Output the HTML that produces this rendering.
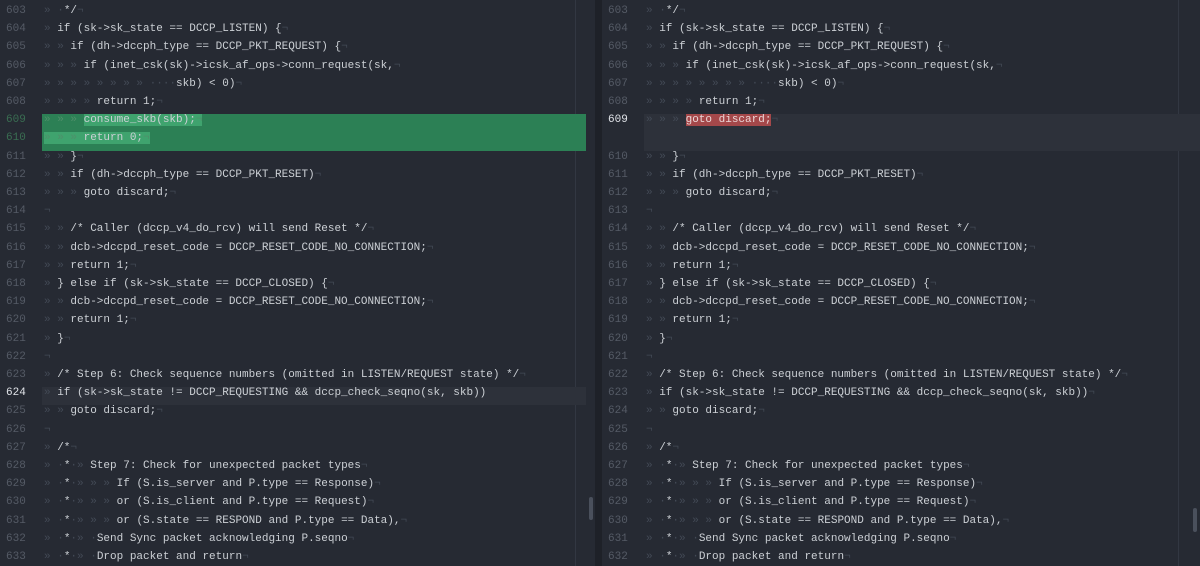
<!DOCTYPE html>
<html><head><meta charset="utf-8"><style>
html,body{margin:0;padding:0;width:1200px;height:566px;overflow:hidden;background:#262a33}
.pane{position:absolute;top:0;height:566px;overflow:hidden;background:#262a33}
#L{left:0;width:595px}
#R{left:602px;width:598px}
#div{position:absolute;left:595px;top:0;width:7px;height:566px;background:#1e2128}
.ln{position:absolute;left:0;height:18.2px;line-height:18.2px;font:11px "Liberation Mono",monospace;white-space:pre;color:#ccd0d5;width:100%;transform:translateY(5px)}
.n{position:absolute;left:6px;color:#555b66}
.c{position:absolute;left:44px}
i{font-style:normal;color:#434a56}
.cur .n{color:#e0e3e8}
.cur{background:linear-gradient(to right,transparent 42px,#2d313a 42px,#2d313a 586px,transparent 586px)}
.grn{background:linear-gradient(to right,transparent 42px,#2c8055 42px,#2c8055 586px,transparent 586px)}
.grn .n{color:#3a6e52}
.grn i{color:#4f8f6a}
.g2{background:#3fa36e}
.red{background:#a4484a;color:#ead7d7}
#R .n{left:6px}
#R .c{left:44px}
.guide{position:absolute;top:0;width:1px;height:566px;background:#323742}
.sb{position:absolute;width:4px;border-radius:2px;background:#4a505c}
</style></head><body>
<div class="pane" id="L">
<div class="guide" style="left:575px"></div>
<div class="sb" style="left:589px;top:497px;height:23px"></div>
<div class="ln" style="top:0px"><span class="n">603</span><span class="c"><i>» ·</i>*/<i>¬</i></span></div>
<div class="ln" style="top:18.2px"><span class="n">604</span><span class="c"><i>» </i>if (sk-&gt;sk_state == DCCP_LISTEN) {<i>¬</i></span></div>
<div class="ln" style="top:36.4px"><span class="n">605</span><span class="c"><i>» » </i>if (dh-&gt;dccph_type == DCCP_PKT_REQUEST) {<i>¬</i></span></div>
<div class="ln" style="top:54.6px"><span class="n">606</span><span class="c"><i>» » » </i>if (inet_csk(sk)-&gt;icsk_af_ops-&gt;conn_request(sk,<i>¬</i></span></div>
<div class="ln" style="top:72.8px"><span class="n">607</span><span class="c"><i>» » » » » » » » ····</i>skb) &lt; 0)<i>¬</i></span></div>
<div class="ln" style="top:91px"><span class="n">608</span><span class="c"><i>» » » » </i>return 1;<i>¬</i></span></div>
<div class="ln grn" style="top:109.2px"><span class="n">609</span><span class="c"><i>» » » </i><span class="g2">consume_skb(skb);<i>¬</i></span></span></div>
<div class="ln grn" style="top:127.4px"><span class="n">610</span><span class="c"><span class="g2"><i>» » » </i>return 0;<i>¬</i></span></span></div>
<div class="ln" style="top:145.6px"><span class="n">611</span><span class="c"><i>» » </i>}<i>¬</i></span></div>
<div class="ln" style="top:163.8px"><span class="n">612</span><span class="c"><i>» » </i>if (dh-&gt;dccph_type == DCCP_PKT_RESET)<i>¬</i></span></div>
<div class="ln" style="top:182px"><span class="n">613</span><span class="c"><i>» » » </i>goto discard;<i>¬</i></span></div>
<div class="ln" style="top:200.2px"><span class="n">614</span><span class="c"><i>¬</i></span></div>
<div class="ln" style="top:218.4px"><span class="n">615</span><span class="c"><i>» » </i>/* Caller (dccp_v4_do_rcv) will send Reset */<i>¬</i></span></div>
<div class="ln" style="top:236.6px"><span class="n">616</span><span class="c"><i>» » </i>dcb-&gt;dccpd_reset_code = DCCP_RESET_CODE_NO_CONNECTION;<i>¬</i></span></div>
<div class="ln" style="top:254.8px"><span class="n">617</span><span class="c"><i>» » </i>return 1;<i>¬</i></span></div>
<div class="ln" style="top:273px"><span class="n">618</span><span class="c"><i>» </i>} else if (sk-&gt;sk_state == DCCP_CLOSED) {<i>¬</i></span></div>
<div class="ln" style="top:291.2px"><span class="n">619</span><span class="c"><i>» » </i>dcb-&gt;dccpd_reset_code = DCCP_RESET_CODE_NO_CONNECTION;<i>¬</i></span></div>
<div class="ln" style="top:309.4px"><span class="n">620</span><span class="c"><i>» » </i>return 1;<i>¬</i></span></div>
<div class="ln" style="top:327.6px"><span class="n">621</span><span class="c"><i>» </i>}<i>¬</i></span></div>
<div class="ln" style="top:345.8px"><span class="n">622</span><span class="c"><i>¬</i></span></div>
<div class="ln" style="top:364px"><span class="n">623</span><span class="c"><i>» </i>/* Step 6: Check sequence numbers (omitted in LISTEN/REQUEST state) */<i>¬</i></span></div>
<div class="ln cur" style="top:382.2px"><span class="n">624</span><span class="c"><i>» </i>if (sk-&gt;sk_state != DCCP_REQUESTING &amp;&amp; dccp_check_seqno(sk, skb))</span></div>
<div class="ln" style="top:400.4px"><span class="n">625</span><span class="c"><i>» » </i>goto discard;<i>¬</i></span></div>
<div class="ln" style="top:418.6px"><span class="n">626</span><span class="c"><i>¬</i></span></div>
<div class="ln" style="top:436.8px"><span class="n">627</span><span class="c"><i>» </i>/*<i>¬</i></span></div>
<div class="ln" style="top:455px"><span class="n">628</span><span class="c"><i>» ·</i>*<i>·» </i>Step 7: Check for unexpected packet types<i>¬</i></span></div>
<div class="ln" style="top:473.2px"><span class="n">629</span><span class="c"><i>» ·</i>*<i>·» » » </i>If (S.is_server and P.type == Response)<i>¬</i></span></div>
<div class="ln" style="top:491.4px"><span class="n">630</span><span class="c"><i>» ·</i>*<i>·» » » </i>or (S.is_client and P.type == Request)<i>¬</i></span></div>
<div class="ln" style="top:509.6px"><span class="n">631</span><span class="c"><i>» ·</i>*<i>·» » » </i>or (S.state == RESPOND and P.type == Data),<i>¬</i></span></div>
<div class="ln" style="top:527.8px"><span class="n">632</span><span class="c"><i>» ·</i>*<i>·» ·</i>Send Sync packet acknowledging P.seqno<i>¬</i></span></div>
<div class="ln" style="top:546px"><span class="n">633</span><span class="c"><i>» ·</i>*<i>·» ·</i>Drop packet and return<i>¬</i></span></div>
</div>
<div id="div"></div>
<div class="pane" id="R">
<div class="guide" style="left:576px"></div>
<div class="sb" style="left:591px;top:508px;height:24px"></div>
<div class="ln" style="top:0px"><span class="n">603</span><span class="c"><i>» ·</i>*/<i>¬</i></span></div>
<div class="ln" style="top:18.2px"><span class="n">604</span><span class="c"><i>» </i>if (sk-&gt;sk_state == DCCP_LISTEN) {<i>¬</i></span></div>
<div class="ln" style="top:36.4px"><span class="n">605</span><span class="c"><i>» » </i>if (dh-&gt;dccph_type == DCCP_PKT_REQUEST) {<i>¬</i></span></div>
<div class="ln" style="top:54.6px"><span class="n">606</span><span class="c"><i>» » » </i>if (inet_csk(sk)-&gt;icsk_af_ops-&gt;conn_request(sk,<i>¬</i></span></div>
<div class="ln" style="top:72.8px"><span class="n">607</span><span class="c"><i>» » » » » » » » ····</i>skb) &lt; 0)<i>¬</i></span></div>
<div class="ln" style="top:91px"><span class="n">608</span><span class="c"><i>» » » » </i>return 1;<i>¬</i></span></div>
<div class="ln cur" style="top:109.2px;background:linear-gradient(to right,transparent 42px,#2d313a 42px)"><span class="n">609</span><span class="c"><i>» » » </i><span class="red">goto discard;</span><i>¬</i></span></div>
<div class="ln" style="top:127.4px;background:linear-gradient(to right,transparent 42px,#2d313a 42px)"></div>
<div class="ln" style="top:145.6px"><span class="n">610</span><span class="c"><i>» » </i>}<i>¬</i></span></div>
<div class="ln" style="top:163.8px"><span class="n">611</span><span class="c"><i>» » </i>if (dh-&gt;dccph_type == DCCP_PKT_RESET)<i>¬</i></span></div>
<div class="ln" style="top:182px"><span class="n">612</span><span class="c"><i>» » » </i>goto discard;<i>¬</i></span></div>
<div class="ln" style="top:200.2px"><span class="n">613</span><span class="c"><i>¬</i></span></div>
<div class="ln" style="top:218.4px"><span class="n">614</span><span class="c"><i>» » </i>/* Caller (dccp_v4_do_rcv) will send Reset */<i>¬</i></span></div>
<div class="ln" style="top:236.6px"><span class="n">615</span><span class="c"><i>» » </i>dcb-&gt;dccpd_reset_code = DCCP_RESET_CODE_NO_CONNECTION;<i>¬</i></span></div>
<div class="ln" style="top:254.8px"><span class="n">616</span><span class="c"><i>» » </i>return 1;<i>¬</i></span></div>
<div class="ln" style="top:273px"><span class="n">617</span><span class="c"><i>» </i>} else if (sk-&gt;sk_state == DCCP_CLOSED) {<i>¬</i></span></div>
<div class="ln" style="top:291.2px"><span class="n">618</span><span class="c"><i>» » </i>dcb-&gt;dccpd_reset_code = DCCP_RESET_CODE_NO_CONNECTION;<i>¬</i></span></div>
<div class="ln" style="top:309.4px"><span class="n">619</span><span class="c"><i>» » </i>return 1;<i>¬</i></span></div>
<div class="ln" style="top:327.6px"><span class="n">620</span><span class="c"><i>» </i>}<i>¬</i></span></div>
<div class="ln" style="top:345.8px"><span class="n">621</span><span class="c"><i>¬</i></span></div>
<div class="ln" style="top:364px"><span class="n">622</span><span class="c"><i>» </i>/* Step 6: Check sequence numbers (omitted in LISTEN/REQUEST state) */<i>¬</i></span></div>
<div class="ln" style="top:382.2px"><span class="n">623</span><span class="c"><i>» </i>if (sk-&gt;sk_state != DCCP_REQUESTING &amp;&amp; dccp_check_seqno(sk, skb))<i>¬</i></span></div>
<div class="ln" style="top:400.4px"><span class="n">624</span><span class="c"><i>» » </i>goto discard;<i>¬</i></span></div>
<div class="ln" style="top:418.6px"><span class="n">625</span><span class="c"><i>¬</i></span></div>
<div class="ln" style="top:436.8px"><span class="n">626</span><span class="c"><i>» </i>/*<i>¬</i></span></div>
<div class="ln" style="top:455px"><span class="n">627</span><span class="c"><i>» ·</i>*<i>·» </i>Step 7: Check for unexpected packet types<i>¬</i></span></div>
<div class="ln" style="top:473.2px"><span class="n">628</span><span class="c"><i>» ·</i>*<i>·» » » </i>If (S.is_server and P.type == Response)<i>¬</i></span></div>
<div class="ln" style="top:491.4px"><span class="n">629</span><span class="c"><i>» ·</i>*<i>·» » » </i>or (S.is_client and P.type == Request)<i>¬</i></span></div>
<div class="ln" style="top:509.6px"><span class="n">630</span><span class="c"><i>» ·</i>*<i>·» » » </i>or (S.state == RESPOND and P.type == Data),<i>¬</i></span></div>
<div class="ln" style="top:527.8px"><span class="n">631</span><span class="c"><i>» ·</i>*<i>·» ·</i>Send Sync packet acknowledging P.seqno<i>¬</i></span></div>
<div class="ln" style="top:546px"><span class="n">632</span><span class="c"><i>» ·</i>*<i>·» ·</i>Drop packet and return<i>¬</i></span></div>
</div>
</body></html>
